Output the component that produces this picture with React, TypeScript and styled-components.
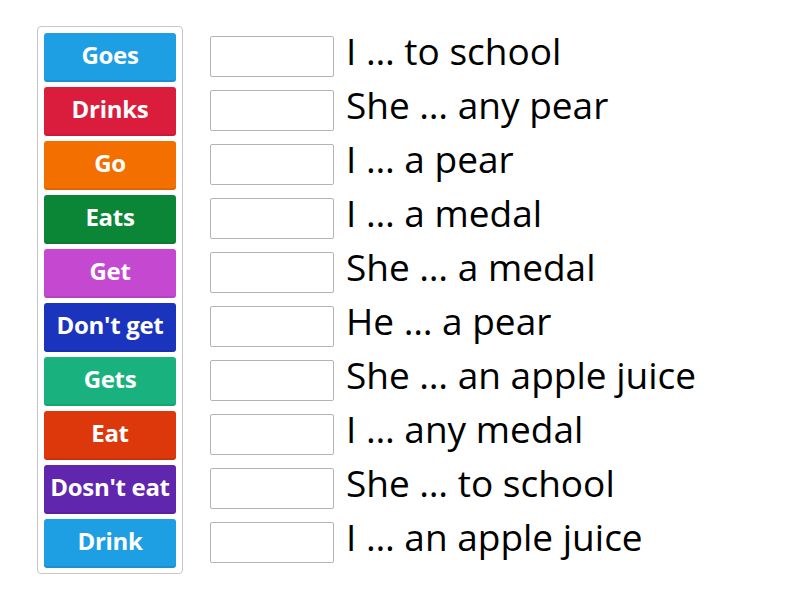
import styled, { createGlobalStyle } from 'styled-components';

const GlobalStyle = createGlobalStyle`
  html, body {
    margin: 0;
    padding: 0;
    background: #ffffff;
    font-family: 'Open Sans', 'Noto Sans', sans-serif;
  }
`;

const WORDS = [
  { label: 'Goes', color: '#1e9ee3' },
  { label: 'Drinks', color: '#db1d3d' },
  { label: 'Go', color: '#f26f00' },
  { label: 'Eats', color: '#0b8636' },
  { label: 'Get', color: '#c548d1' },
  { label: "Don't get", color: '#1b34bd' },
  { label: 'Gets', color: '#19b27e' },
  { label: 'Eat', color: '#dc380b' },
  { label: "Dosn't eat", color: '#6026ad' },
  { label: 'Drink', color: '#1e9ee3' },
];

const SENTENCES = [
  'I … to school',
  'She … any pear',
  'I … a pear',
  'I … a medal',
  'She … a medal',
  'He … a pear',
  'She … an apple juice',
  'I … any medal',
  'She … to school',
  'I … an apple juice',
];

function App() {
  return (
    <>
      <GlobalStyle />
      <Page>
        <Tray>
          {WORDS.map((w) => (
            <Tile key={w.label} $color={w.color}>
              {w.label}
            </Tile>
          ))}
        </Tray>
        <Rows>
          {SENTENCES.map((s) => (
            <Row key={s}>
              <Slot />
              <Sentence>{s}</Sentence>
            </Row>
          ))}
        </Rows>
      </Page>
    </>
  );
}

const Page = styled.div`
  display: flex;
  align-items: flex-start;
  padding: 26px 0 0 37px;
  width: 800px;
  height: 600px;
  box-sizing: border-box;
`;

const Tray = styled.div`
  display: flex;
  flex-direction: column;
  gap: 5px;
  padding: 6px 6px 5px 6px;
  border: 1px solid #c8c8c8;
  border-radius: 4px;
`;

const Tile = styled.div<{ $color: string }>`
  width: 132px;
  height: 49px;
  box-sizing: border-box;
  padding-bottom: 7px;
  display: flex;
  align-items: center;
  justify-content: center;
  border-radius: 3px;
  background: ${(p) => p.$color};
  box-shadow: inset 0 -2px 0 rgba(0, 0, 0, 0.08);
  color: #ffffff;
  font-weight: 700;
  font-size: 24px;
  letter-spacing: -0.3px;
  white-space: nowrap;
`;

const Rows = styled.div`
  display: flex;
  flex-direction: column;
  gap: 13px;
  margin-left: 27px;
  padding-top: 10px;
`;

const Row = styled.div`
  display: flex;
  align-items: flex-start;
  height: 41px;
`;

const Slot = styled.div`
  width: 122px;
  height: 39px;
  border: 1px solid #b4b4b4;
  border-radius: 2px;
  background: #ffffff;
`;

const Sentence = styled.div`
  margin-left: 12px;
  font-size: 37px;
  line-height: 30px;
  color: #000000;
  white-space: nowrap;
`;

export default App;
